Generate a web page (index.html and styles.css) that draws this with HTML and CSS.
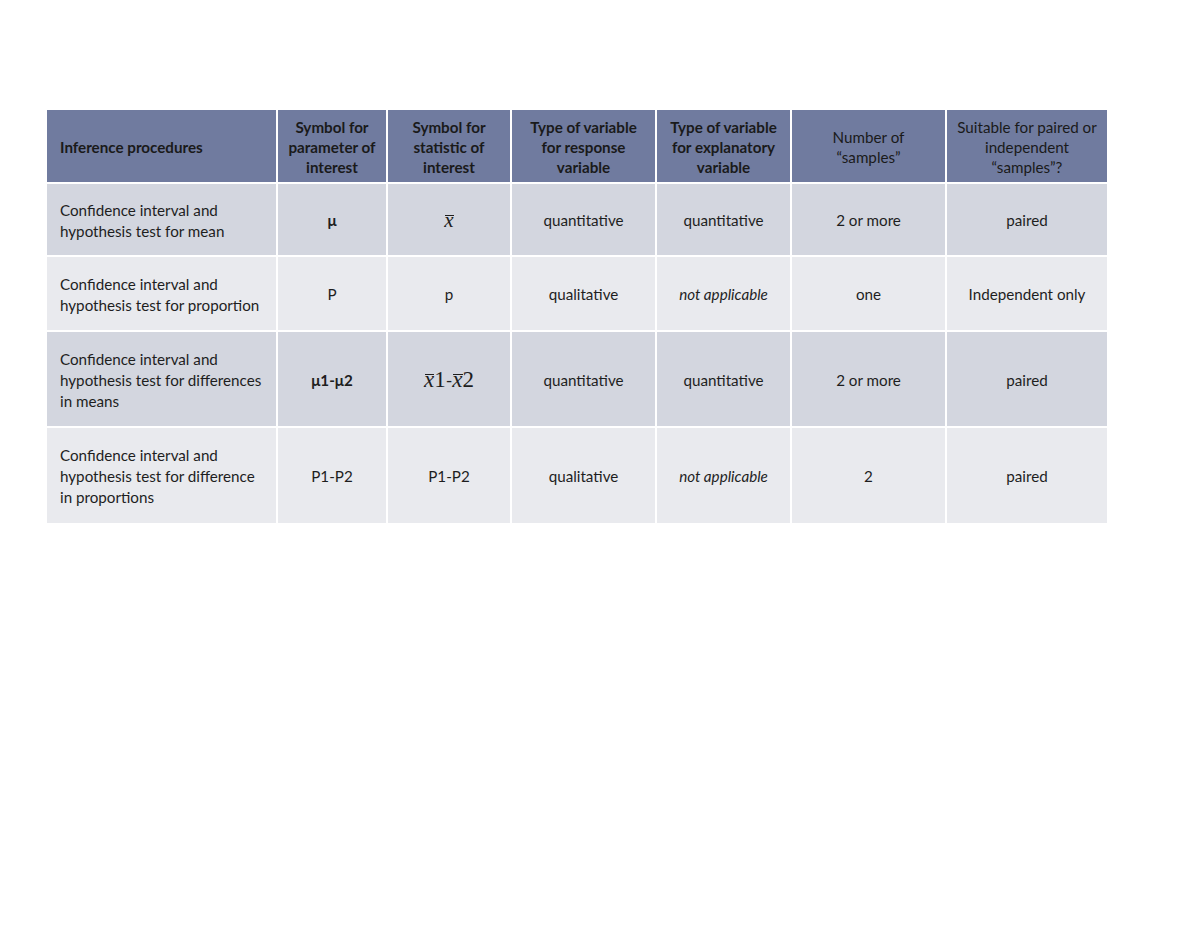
FILE: index.html
```html
<!DOCTYPE html>
<html lang="en">
<head>
<meta charset="utf-8">
<title>Inference procedures</title>
<link rel="stylesheet" href="styles.css">
</head>
<body>
<div class="page">
  <div class="grid">
    <div class="cell head first b">Inference procedures</div>
    <div class="cell head b">Symbol for<br>parameter of<br>interest</div>
    <div class="cell head b">Symbol for<br>statistic of<br>interest</div>
    <div class="cell head b">Type of variable<br>for response<br>variable</div>
    <div class="cell head b">Type of variable<br>for explanatory<br>variable</div>
    <div class="cell head">Number of<br>“samples”</div>
    <div class="cell head">Suitable for paired or<br>independent<br>“samples”?</div>

    <div class="cell dark first">Confidence interval and<br>hypothesis test for mean</div>
    <div class="cell dark b">μ</div>
    <div class="cell dark"><span class="math"><span class="bar">x</span></span></div>
    <div class="cell dark">quantitative</div>
    <div class="cell dark">quantitative</div>
    <div class="cell dark">2 or more</div>
    <div class="cell dark">paired</div>

    <div class="cell light first">Confidence interval and<br>hypothesis test for proportion</div>
    <div class="cell light">P</div>
    <div class="cell light">p</div>
    <div class="cell light">qualitative</div>
    <div class="cell light"><i>not applicable</i></div>
    <div class="cell light">one</div>
    <div class="cell light">Independent only</div>

    <div class="cell dark first">Confidence interval and<br>hypothesis test for differences<br>in means</div>
    <div class="cell dark b">μ1-μ2</div>
    <div class="cell dark"><span class="math big"><span class="bar">x</span><span class="num">1</span><span class="dash">-</span><span class="bar">x</span><span class="num">2</span></span></div>
    <div class="cell dark">quantitative</div>
    <div class="cell dark">quantitative</div>
    <div class="cell dark">2 or more</div>
    <div class="cell dark">paired</div>

    <div class="cell light first">Confidence interval and<br>hypothesis test for difference<br>in proportions</div>
    <div class="cell light">P1-P2</div>
    <div class="cell light">P1-P2</div>
    <div class="cell light">qualitative</div>
    <div class="cell light"><i>not applicable</i></div>
    <div class="cell light">2</div>
    <div class="cell light">paired</div>
  </div>
</div>
</body>
</html>
```

FILE: styles.css
```css
html, body {
  margin: 0;
  padding: 0;
  background: #ffffff;
}

body {
  font-family: Lato, "Open Sans", "Liberation Sans", sans-serif;
  font-size: 15.2px;
  color: #1e1e1e;
}

.page {
  padding: 110px 0 0 47px;
}

.grid {
  display: grid;
  grid-template-columns: 229px 108px 122px 143px 133px 153px 160px;
  grid-template-rows: 72px 71px 73px 94px 95px;
  gap: 2px;
  width: 1060px;
}

.cell {
  display: flex;
  align-items: center;
  justify-content: center;
  text-align: center;
  line-height: 21px;
  padding-top: 2px;
  box-sizing: border-box;
}

.cell.first {
  justify-content: flex-start;
  text-align: left;
  padding-left: 13px;
}

.head {
  background: #707b9f;
  color: #1a1a1a;
  line-height: 20px;
  padding-top: 1px;
}

.dark {
  background: #d3d6df;
}

.light {
  background: #e9eaee;
}

.b {
  font-weight: bold;
}

.math {
  font-family: "Liberation Serif", "DejaVu Serif", serif;
  font-size: 21px;
}

.math.big {
  font-size: 23px;
}

.dash {
  font-family: Lato, "Liberation Sans", sans-serif;
  font-size: 18px;
}

.bar {
  font-style: italic;
  display: inline-block;
  position: relative;
}

.bar::before {
  content: "";
  position: absolute;
  left: 1px;
  right: 0;
  top: 0.22em;
  border-top: 1px solid #1e1e1e;
}

.num {
  font-style: normal;
}
```
